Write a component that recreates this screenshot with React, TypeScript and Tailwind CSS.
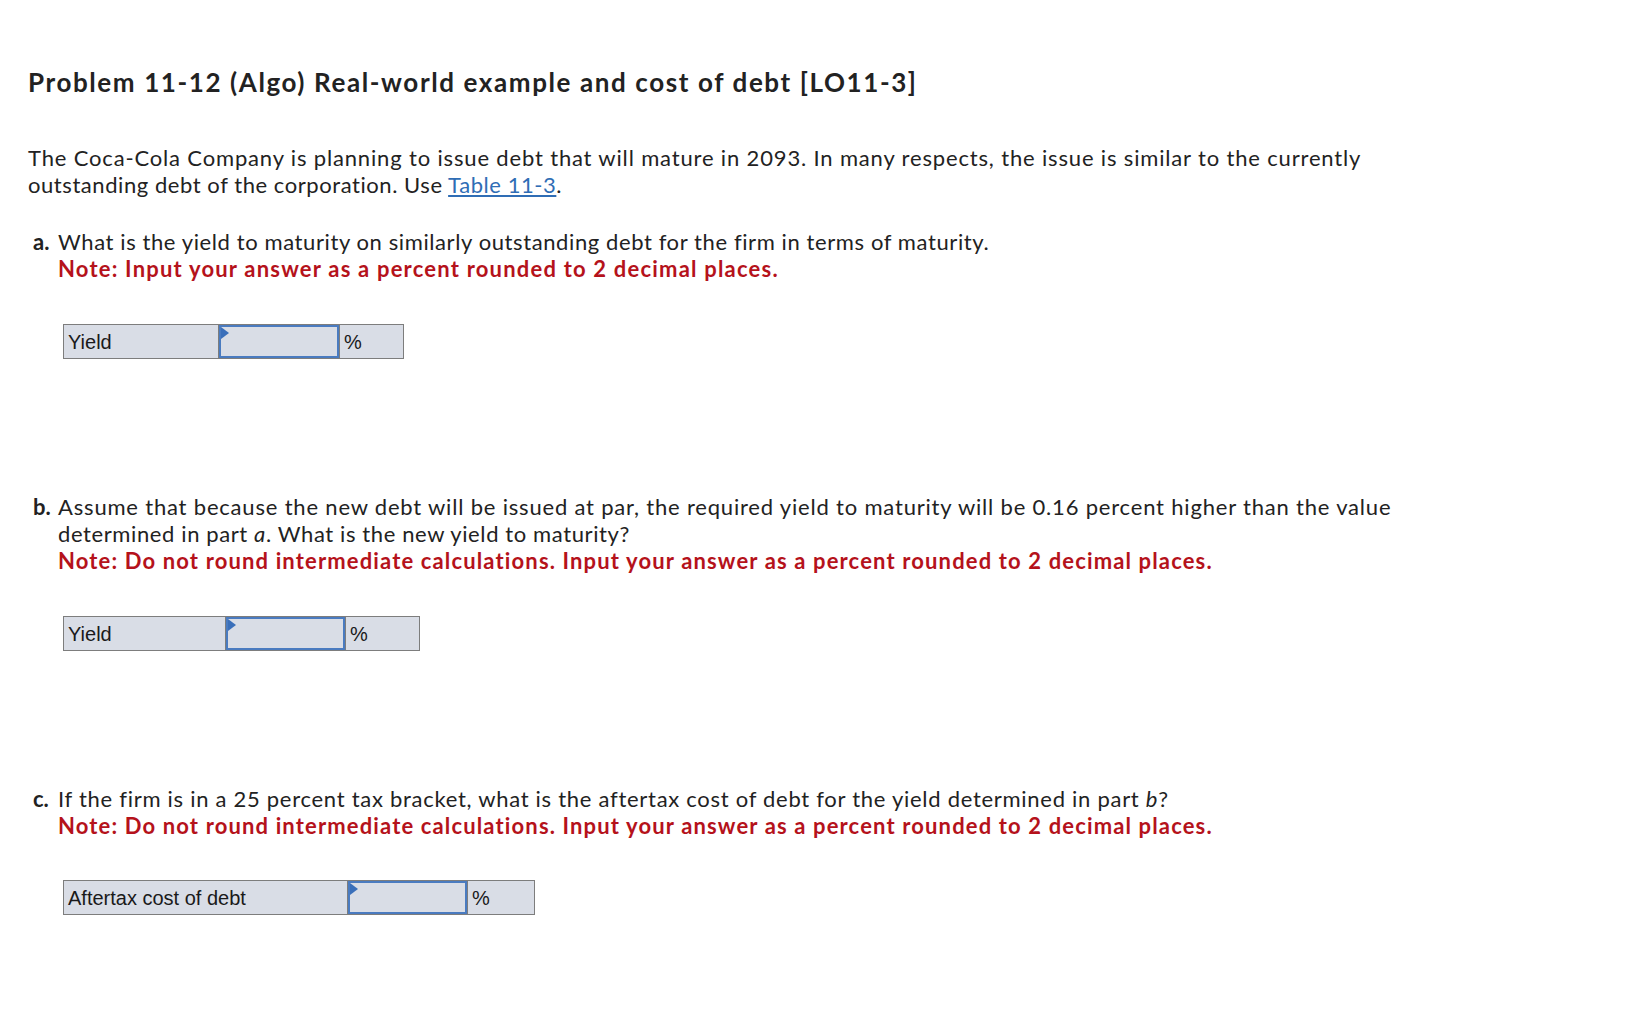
import React from "react";

const body = { fontFamily: "Lato, 'Open Sans', sans-serif" } as React.CSSProperties;
const arial = { fontFamily: "'Liberation Sans', Arial, sans-serif" } as React.CSSProperties;

function AnswerBox({ label, labelW, inputW, pctW }: { label: string; labelW: string; inputW: string; pctW: string }) {
  return (
    <div className="flex h-[35px] w-fit border border-[#7d7d7d] bg-[#d9dde6] text-[20px] text-[#1a1a1a]" style={arial}>
      <div className={`${labelW} flex items-center border-r border-[#7d7d7d] pl-[4px]`}>{label}</div>
      <div className={`${inputW} relative border-2 border-[#4a7bc0] bg-[#d9dde6]`}>
        <div className="absolute left-0 top-0 h-0 w-0 border-y-[6px] border-l-[8px] border-y-transparent border-l-[#3a6fba]" />
      </div>
      <div className={`${pctW} flex items-center border-l border-[#7d7d7d] pl-[4px]`}>%</div>
    </div>
  );
}

export default function App() {
  return (
    <div className="min-h-[1035px] w-[1650px] bg-white pl-[28px] pt-[66px] text-[#222222]" style={body}>
      <h1 className="text-[26px] font-bold leading-[32px] tracking-[1.6px] text-[#222222]">
        Problem 11-12 (Algo) Real-world example and cost of debt [LO11-3]
      </h1>

      <p className="mt-[46px] text-[22px] leading-[27px]">
        <span className="tracking-[0.84px]">
          The Coca-Cola Company is planning to issue debt that will mature in 2093. In many respects, the issue is similar to the currently
        </span>
        <br />
        <span className="tracking-[0.56px]">
          outstanding debt of the corporation. Use{" "}
          <a className="text-[#2f6db5] underline underline-offset-2" href="#">
            Table 11-3
          </a>
          .
        </span>
      </p>

      {/* a */}
      <div className="mt-[30px] flex text-[22px] leading-[27px]">
        <span className="ml-[5px] w-[25px] shrink-0 font-bold">a.</span>
        <div>
          <div className="tracking-[0.6px]">
            What is the yield to maturity on similarly outstanding debt for the firm in terms of maturity.
          </div>
          <div className="font-bold tracking-[1.2px] text-[#b5121b]">
            Note: Input your answer as a percent rounded to 2 decimal places.
          </div>
        </div>
      </div>
      <div className="ml-[35px] mt-[42px]">
        <AnswerBox label="Yield" labelW="w-[155px]" inputW="w-[120px]" pctW="w-[64px]" />
      </div>

      {/* b */}
      <div className="mt-[134px] flex text-[22px] leading-[27px]">
        <span className="ml-[5px] w-[25px] shrink-0 font-bold">b.</span>
        <div>
          <div>
            <span className="tracking-[0.81px]">
              Assume that because the new debt will be issued at par, the required yield to maturity will be 0.16 percent higher than the value
            </span>
            <br />
            <span className="tracking-[0.61px]">
              determined in part <i>a</i>. What is the new yield to maturity?
            </span>
          </div>
          <div className="font-bold tracking-[1.14px] text-[#b5121b]">
            Note: Do not round intermediate calculations. Input your answer as a percent rounded to 2 decimal places.
          </div>
        </div>
      </div>
      <div className="ml-[35px] mt-[42px]">
        <AnswerBox label="Yield" labelW="w-[162px]" inputW="w-[119px]" pctW="w-[74px]" />
      </div>

      {/* c */}
      <div className="mt-[134px] flex text-[22px] leading-[27px]">
        <span className="ml-[5px] w-[25px] shrink-0 font-bold">c.</span>
        <div>
          <div className="tracking-[0.72px]">
            If the firm is in a 25 percent tax bracket, what is the aftertax cost of debt for the yield determined in part <i>b</i>?
          </div>
          <div className="font-bold tracking-[1.14px] text-[#b5121b]">
            Note: Do not round intermediate calculations. Input your answer as a percent rounded to 2 decimal places.
          </div>
        </div>
      </div>
      <div className="ml-[35px] mt-[41px]">
        <AnswerBox label="Aftertax cost of debt" labelW="w-[284px]" inputW="w-[119px]" pctW="w-[67px]" />
      </div>
    </div>
  );
}
